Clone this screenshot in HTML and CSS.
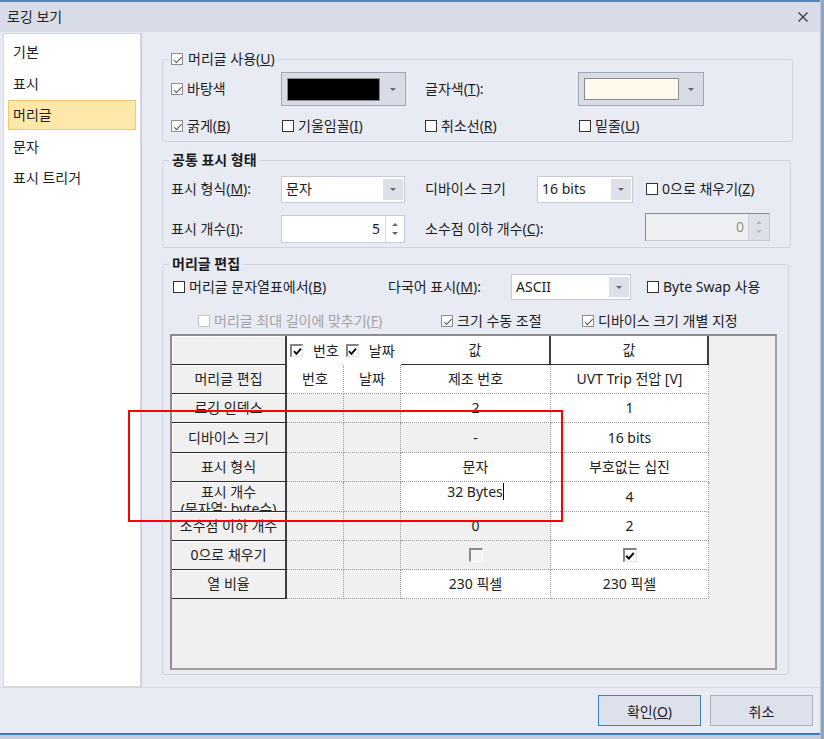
FILE: index.html
```html
<!DOCTYPE html>
<html lang="ko">
<head>
<meta charset="utf-8">
<title>로깅 보기</title>
<link rel="stylesheet" href="styles.css">
</head>
<body>
<div class="screen">
  <div class="dialog">
    <div class="titlebar">
      <span class="title">로깅 보기</span>
      <span class="close"><svg width="10" height="10" viewBox="0 0 10 10"><path d="M0.5 0.5 L9.5 9.5 M9.5 0.5 L0.5 9.5" stroke="#3a3a3a" stroke-width="1.3" fill="none"/></svg></span>
    </div>
    <div class="main">
      <ul class="nav">
        <li>기본</li>
        <li>표시</li>
        <li class="sel">머리글</li>
        <li>문자</li>
        <li>표시 트리거</li>
      </ul>
      <div class="panel">
        <fieldset class="grp g1">
          <legend><span class="cb on"></span>머리글 사용(<u>U</u>)</legend>
          <div class="row rA">
            <span class="chk w110"><span class="cb on"></span>바탕색</span>
            <span class="ccombo w125 mr19"><span class="sw black"></span><span class="arr"><span class="tri"></span></span></span>
            <span class="lbl w153">글자색(<u>T</u>):</span>
            <span class="ccombo w126"><span class="sw cream"></span><span class="arr"><span class="tri"></span></span></span>
          </div>
          <div class="row rB">
            <span class="chk w111"><span class="cb on"></span>굵게(<u>B</u>)</span>
            <span class="chk w143"><span class="cb"></span>기울임꼴(<u>I</u>)</span>
            <span class="chk w154"><span class="cb"></span>취소선(<u>R</u>)</span>
            <span class="chk"><span class="cb"></span>밑줄(<u>U</u>)</span>
          </div>
        </fieldset>

        <fieldset class="grp g2">
          <legend class="bold">공통 표시 형태</legend>
          <div class="row r28">
            <span class="lbl w110">표시 형식(<u>M</u>):</span>
            <span class="combo w124 mr20"><span class="v">문자</span><span class="dd"><span class="tri"></span></span></span>
            <span class="lbl w112">디바이스 크기</span>
            <span class="combo w96 mr13"><span class="v">16 bits</span><span class="dd"><span class="tri"></span></span></span>
            <span class="chk"><span class="cb"></span>0으로 채우기(<u>Z</u>)</span>
          </div>
          <div class="row r28 gap12">
            <span class="lbl w110">표시 개수(<u>I</u>):</span>
            <span class="spin w124 mr20"><span class="v">5</span><span class="sb"><span class="tri up"></span><span class="tri"></span></span></span>
            <span class="lbl w220">소수점 이하 개수(<u>C</u>):</span>
            <span class="spin off w125"><span class="v">0</span><span class="sb"><span class="tri up"></span><span class="tri"></span></span></span>
          </div>
        </fieldset>

        <fieldset class="grp g3">
          <legend class="bold">머리글 편집</legend>
          <div class="row r26">
            <span class="chk w217 ml2"><span class="cb"></span>머리글 문자열표에서(<u>B</u>)</span>
            <span class="lbl w123">다국어 표시(<u>M</u>):</span>
            <span class="combo w120 h26 mr16"><span class="v">ASCII</span><span class="dd"><span class="tri"></span></span></span>
            <span class="chk"><span class="cb"></span>Byte Swap 사용</span>
          </div>
          <div class="row r18">
            <span class="chk w243 ml27 dis"><span class="cb"></span>머리글 최대 길이에 맞추기(<u>F</u>)</span>
            <span class="chk w141"><span class="cb on"></span>크기 수동 조절</span>
            <span class="chk"><span class="cb on"></span>디바이스 크기 개별 지정</span>
          </div>
          <div class="grid">
            <div class="tbl">
              <div class="h"></div>
              <div class="top2"><span class="ccb"><svg width="9" height="9" viewBox="0 0 9 9"><path d="M1 4.2 L3.4 6.8 L8 1.6" stroke="#000" stroke-width="1.8" fill="none"/></svg></span><span class="t1">번호</span><span class="ccb ml7"><svg width="9" height="9" viewBox="0 0 9 9"><path d="M1 4.2 L3.4 6.8 L8 1.6" stroke="#000" stroke-width="1.8" fill="none"/></svg></span><span class="t1">날짜</span></div>
              <div class="hw">값</div>
              <div class="hw">값</div>

              <div class="h">머리글 편집</div>
              <div class="d w">번호</div>
              <div class="d w">날짜</div>
              <div class="d w">제조 번호</div>
              <div class="d w">UVT Trip 전압 [V]</div>

              <div class="h">로깅 인덱스</div>
              <div class="d"></div>
              <div class="d"></div>
              <div class="d w">2</div>
              <div class="d w">1</div>

              <div class="h">디바이스 크기</div>
              <div class="d"></div>
              <div class="d"></div>
              <div class="d">-</div>
              <div class="d w">16 bits</div>

              <div class="h">표시 형식</div>
              <div class="d"></div>
              <div class="d"></div>
              <div class="d w">문자</div>
              <div class="d w">부호없는 십진</div>

              <div class="h two">표시 개수<br>(문자열: byte수)</div>
              <div class="d"></div>
              <div class="d"></div>
              <div class="d w edit"><span>32 Bytes</span><span class="caret"></span></div>
              <div class="d w">4</div>

              <div class="h">소수점 이하 개수</div>
              <div class="d"></div>
              <div class="d"></div>
              <div class="d">0</div>
              <div class="d w">2</div>

              <div class="h">0으로 채우기</div>
              <div class="d"></div>
              <div class="d"></div>
              <div class="d"><span class="ccb big off"></span></div>
              <div class="d w"><span class="ccb big"><svg width="10" height="10" viewBox="0 0 10 10"><path d="M1.2 4.8 L3.8 7.6 L8.8 1.8" stroke="#000" stroke-width="2" fill="none"/></svg></span></div>

              <div class="h">열 비율</div>
              <div class="d"></div>
              <div class="d"></div>
              <div class="d w">230 픽셀</div>
              <div class="d w">230 픽셀</div>
            </div>
          </div>
        </fieldset>
      </div>
    </div>
    <div class="footer">
      <button class="btn default">확인(<u>O</u>)</button>
      <button class="btn">취소</button>
    </div>
  </div>
  <div class="strip"></div>
  <div class="redbox"></div>
</div>
</body>
</html>
```
FILE: styles.css
```css
* { box-sizing: border-box; }
html, body { margin: 0; padding: 0; }
body {
  width: 824px;
  height: 739px;
  overflow: hidden;
  font-family: "Noto Sans", "Noto Sans CJK KR", sans-serif;
  font-size: 14px;
  line-height: 18px;
  color: #1e1e1e;
  background: #c5ccd8;
}
u { text-decoration: underline; text-underline-offset: 1px; }

.screen { position: relative; display: flex; width: 824px; height: 739px; }
.dialog {
  width: 820px;
  height: 735px;
  display: flex;
  flex-direction: column;
  background: #e8ebf4;
  border-top: 2px solid #5683b3;
  border-bottom: 2px solid #3b7bbd;
}
.strip { width: 4px; height: 739px; background: #8da4c2; border-left: 1px solid #b9c4d4; }

.titlebar {
  height: 30px;
  flex: none;
  display: flex;
  align-items: center;
  justify-content: space-between;
  background: #d8dce8;
  padding: 0 2px 0 7px;
}
.title { line-height: 30px; color: #222; }
.close { width: 30px; height: 30px; display: flex; align-items: center; justify-content: center; }

.main { height: 655px; flex: none; display: flex; padding: 1px 0 0 3px; }
.nav {
  list-style: none;
  margin: 0;
  width: 138px;
  height: 654px;
  padding: 3px 4px 0;
  border: 1px solid #d4d7df;
  background: #fff;
  flex: none;
}
.nav li { height: 30px; line-height: 30px; padding-left: 5px; margin-bottom: 1.5px; }
.nav li.sel { background: #fde8aa; box-shadow: inset 0 0 0 1px #f2c871; }

.panel { flex: 1; border-left: 1px solid #cdd1db; padding-left: 20px; }

.grp {
  margin: 0;
  min-width: 0;
  border: 1px solid #cfd3dc;
  border-radius: 3px;
}
.grp.g1 { width: 631px; margin-top: 17px; padding: 4px 8px 6px; }
.grp.g2 { width: 629px; margin-top: 9px; padding: 6px 8px 4px; }
.grp.g3 { width: 627px; margin-top: 7px; padding: 1px 8px 4px; }
legend { padding: 0 3px; margin-left: -3px; line-height: 18px; }
legend.bold { font-weight: 700; margin-left: -2px; color: #1a1a1a; }
legend .cb { display: inline-block; vertical-align: -1px; margin-right: 5px; }

.row { display: flex; align-items: center; }
.rA { height: 34px; }
.rB { height: 18px; margin-top: 11px; }
.r28 { height: 28px; }
.gap12 { margin-top: 12px; }
.r26 { height: 26px; }
.r18 { height: 18px; margin-top: 12px; }

.lbl, .chk { display: flex; align-items: center; white-space: nowrap; flex: none; }
.w96 { width: 96px; } .w110 { width: 110px; } .w111 { width: 111px; } .w112 { width: 112px; }
.w120 { width: 120px; } .w123 { width: 123px; } .w124 { width: 124px; } .w125 { width: 125px; }
.w126 { width: 126px; } .w141 { width: 141px; } .w143 { width: 143px; } .w153 { width: 153px; }
.w154 { width: 154px; } .w217 { width: 217px; } .w220 { width: 220px; } .w243 { width: 243px; }
.mr13 { margin-right: 13px; } .mr16 { margin-right: 16px; } .mr19 { margin-right: 19px; } .mr20 { margin-right: 20px; }
.ml2 { padding-left: 2px; } .ml27 { margin-left: 27px; } .ml7 { margin-left: 7px; }

.cb {
  position: relative;
  width: 12px;
  height: 12px;
  border: 1px solid #333;
  background: #fff;
  margin-right: 4px;
  flex: none;
}
.cb.on { border-color: #8e8e8e; }
.cb.on::after {
  content: "";
  position: absolute;
  left: 3.5px;
  top: 0.5px;
  width: 3px;
  height: 6.5px;
  border: solid #505050;
  border-width: 0 1.3px 1.3px 0;
  transform: rotate(45deg);
}
.dis { color: #a3a3a3; }
.dis .cb { border-color: #c4c4c4; }

.tri {
  width: 0;
  height: 0;
  border-left: 3px solid transparent;
  border-right: 3px solid transparent;
  border-top: 3px solid #666;
}
.tri.up { border-top: 0; border-bottom: 3px solid #666; }

.ccombo {
  display: flex;
  align-items: center;
  height: 34px;
  border: 1px solid #a0a6b3;
  background: #d8dce6;
  padding-left: 5px;
  flex: none;
}
.sw { width: 93px; height: 23px; border: 1px solid #8a8a8a; flex: none; }
.w126 .sw { width: 95px; height: 22px; }
.sw.black { background: #000; }
.sw.cream { background: #fffaec; }
.ccombo .arr { flex: 1; display: flex; justify-content: center; }

.combo {
  display: flex;
  height: 27px;
  border: 1px solid #c6cad3;
  background: #fff;
  flex: none;
}
.combo.h26 { height: 26px; }
.combo .v { flex: 1; padding-left: 4px; display: flex; align-items: center; white-space: nowrap; }
.combo .dd {
  width: 20px;
  margin: 2px 1px 2px 0;
  background: #dde0e8;
  display: flex;
  align-items: center;
  justify-content: center;
}

.spin {
  display: flex;
  height: 28px;
  border: 1px solid #c6cad3;
  background: #fff;
  flex: none;
}
.spin .v { flex: 1; display: flex; align-items: center; justify-content: flex-end; padding-right: 5px; }
.spin .sb {
  width: 19px;
  border-left: 1px solid #d6d9e0;
  display: flex;
  flex-direction: column;
  justify-content: space-evenly;
  align-items: center;
}
.spin.off {
  align-self: flex-start;
  margin-top: -2px;
  border-color: #8a8a8a #c3c6ce #c3c6ce #8a8a8a;
  background: #eff0f4;
  color: #8f8f8f;
}
.spin.off .v { padding-right: 4px; }
.spin.off .sb { width: 21px; background: #dde0e8; border-left: 1px solid #cfd2da; }
.spin.off .tri { border-top-color: #b5b8bf; }
.spin.off .tri.up { border-bottom-color: #b5b8bf; }

.grid {
  width: 607px;
  height: 336px;
  margin-left: -1px;
  margin-top: 4px;
  border: 2px solid;
  border-color: #8d8d8d #a2a2a2 #a2a2a2 #8d8d8d;
  background: #f0f0f0;
}
.tbl {
  display: grid;
  grid-template-columns: 115px 57px 57px 150px 158px;
  grid-template-rows: 29px 29px 29px 30px 29px 30px 29px 29px 29px;
}
.tbl > div {
  display: flex;
  align-items: center;
  justify-content: center;
  white-space: nowrap;
  overflow: hidden;
  color: #222;
}
.tbl .h {
  background: #f0f0f0;
  border-right: 2px solid #3e3e3e;
  border-bottom: 1px solid #2e2e2e;
  box-shadow: inset 1px 1px 0 #fff;
}
.tbl .h.two { line-height: 17px; align-items: flex-start; padding-top: 1px; text-align: center; }
.tbl .hw {
  background: #fff;
  border-right: 2px solid #3e3e3e;
  border-bottom: 1px solid #2e2e2e;
}
.tbl .top2 { grid-column: span 2; background: #fff; justify-content: flex-start; padding-left: 3px; }
.tbl .d { border-right: 1px dotted #9a9a9a; border-bottom: 1px dotted #9a9a9a; }
.tbl .w { background: #fff; }
.tbl .edit { align-items: flex-start; padding-top: 1px; }
.caret { width: 1px; height: 17px; background: #000; margin-left: 0; }
.t1 { margin-left: 10px; }

.ccb {
  width: 13px;
  height: 13px;
  border-style: solid;
  border-width: 2px 1px 1px 2px;
  border-color: #838383 #e4e4e4 #e4e4e4 #838383;
  background: #fff;
  display: inline-flex;
  align-items: center;
  justify-content: center;
  flex: none;
}
.ccb.big { width: 14px; height: 14px; }
.ccb.off { background: #f4f4f4; border-color: #8a8a8a #fafafa #fafafa #8a8a8a; }

.footer {
  flex: 1;
  display: flex;
  justify-content: flex-end;
  align-items: flex-start;
  border-top: 1px solid #d5d9e2;
  padding: 7px 7px 0 0;
}
.btn {
  width: 103px;
  height: 31px;
  margin: 0 0 0 9px;
  padding: 0;
  border: 1px solid #aab0bb;
  background: #dde1eb;
  font-family: inherit;
  font-size: 14px;
  color: #222;
}
.btn.default { border-color: #3f7ebc; }

.redbox {
  position: absolute;
  left: 128px;
  top: 410px;
  width: 435px;
  height: 112px;
  border: 2px solid #f00;
  pointer-events: none;
}
```
